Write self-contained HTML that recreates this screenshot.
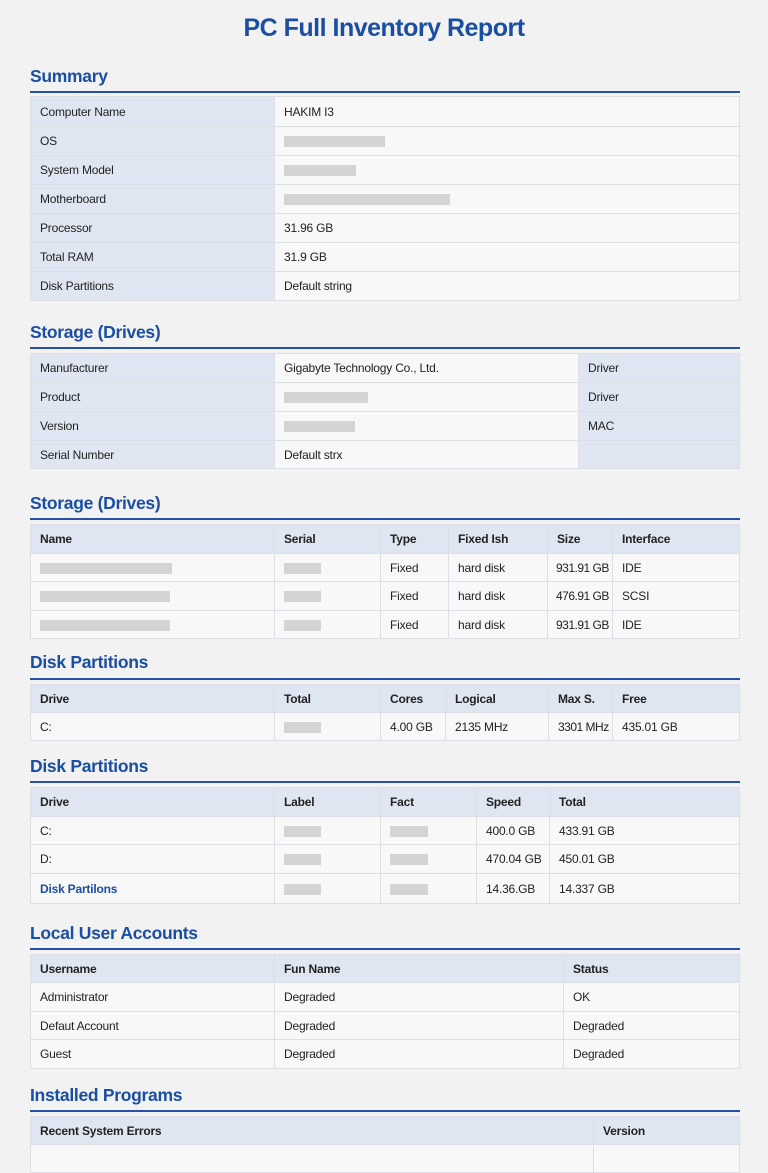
<!DOCTYPE html>
<html><head><meta charset="utf-8"><style>
*{margin:0;padding:0;box-sizing:border-box}
body{width:768px;height:1152px;background:#f2f2f2;font-family:"Liberation Sans",sans-serif;color:#222;position:relative;overflow:hidden}
h1{position:absolute;top:14px;left:0;width:768px;text-align:center;font-size:25px;color:#1a4ea3;font-weight:bold;letter-spacing:-0.5px}
h2{position:absolute;left:30px;font-size:17.5px;color:#1a4ea3;font-weight:bold;letter-spacing:-0.3px}
.ln{position:absolute;left:30px;width:710px;height:2px;background:#2a4fa8}
table{position:absolute;left:30px;width:710px;border-collapse:collapse;table-layout:fixed;background:#f8f8f8;font-size:12px;letter-spacing:-0.2px;border:1px solid #d8dde5}
td{border:1px solid #dcdfe4;padding:0 8px 0 9px;white-space:nowrap;overflow:hidden}
.h td,td.l{background:#dfe6f1;font-weight:bold;color:#222}
td.l.n{font-weight:normal}
.b{display:inline-block;height:11px;background:#d4d4d4;vertical-align:middle}
.bl{color:#1a4ea3!important}
</style></head><body>
<h1>PC Full Inventory Report</h1>

<h2 style="top:66px">Summary</h2><div class="ln" style="top:91px"></div>
<table style="top:96px"><colgroup><col style="width:244px"><col></colgroup>
<tr style="height:30px"><td class="l n">Computer Name</td><td>HAKIM I3</td></tr>
<tr style="height:29px"><td class="l n">OS</td><td><span class="b" style="width:101px"></span></td></tr>
<tr style="height:29px"><td class="l n">System Model</td><td><span class="b" style="width:72px"></span></td></tr>
<tr style="height:29px"><td class="l n">Motherboard</td><td><span class="b" style="width:166px"></span></td></tr>
<tr style="height:29px"><td class="l n">Processor</td><td>31.96 GB</td></tr>
<tr style="height:29px"><td class="l n">Total RAM</td><td>31.9 GB</td></tr>
<tr style="height:29px"><td class="l n">Disk Partitions</td><td>Default string</td></tr>
</table>

<h2 style="top:322px">Storage (Drives)</h2><div class="ln" style="top:347px"></div>
<table style="top:353px"><colgroup><col style="width:244px"><col style="width:304px"><col></colgroup>
<tr style="height:29px"><td class="l n">Manufacturer</td><td>Gigabyte Technology Co., Ltd.</td><td class="l n">Driver</td></tr>
<tr style="height:29px"><td class="l n">Product</td><td><span class="b" style="width:84px"></span></td><td class="l n">Driver</td></tr>
<tr style="height:29px"><td class="l n">Version</td><td><span class="b" style="width:71px"></span></td><td class="l n">MAC</td></tr>
<tr style="height:28px"><td class="l n">Serial Number</td><td>Default strx</td><td class="l n"></td></tr>
</table>

<h2 style="top:493px">Storage (Drives)</h2><div class="ln" style="top:518px"></div>
<table style="top:524px"><colgroup><col style="width:244px"><col style="width:106px"><col style="width:68px"><col style="width:99px"><col style="width:65px"><col></colgroup>
<tr class="h" style="height:29px"><td>Name</td><td>Serial</td><td>Type</td><td>Fixed Ish</td><td>Size</td><td>Interface</td></tr>
<tr style="height:28px"><td><span class="b" style="width:132px"></span></td><td><span class="b" style="width:37px"></span></td><td>Fixed</td><td>hard disk</td><td style="padding-left:8px;letter-spacing:-0.5px">931.91 GB</td><td>IDE</td></tr>
<tr style="height:29px"><td><span class="b" style="width:130px"></span></td><td><span class="b" style="width:37px"></span></td><td>Fixed</td><td>hard disk</td><td style="padding-left:8px;letter-spacing:-0.5px">476.91 GB</td><td>SCSI</td></tr>
<tr style="height:28px"><td><span class="b" style="width:130px"></span></td><td><span class="b" style="width:37px"></span></td><td>Fixed</td><td>hard disk</td><td style="padding-left:8px;letter-spacing:-0.5px">931.91 GB</td><td>IDE</td></tr>
</table>

<h2 style="top:652px">Disk Partitions</h2><div class="ln" style="top:678px"></div>
<table style="top:684px"><colgroup><col style="width:244px"><col style="width:106px"><col style="width:65px"><col style="width:103px"><col style="width:64px"><col></colgroup>
<tr class="h" style="height:28px"><td>Drive</td><td>Total</td><td>Cores</td><td>Logical</td><td>Max S.</td><td>Free</td></tr>
<tr style="height:28px"><td>C:</td><td><span class="b" style="width:37px"></span></td><td>4.00 GB</td><td>2135 MHz</td><td style="letter-spacing:-0.5px">3301 MHz</td><td>435.01 GB</td></tr>
</table>

<h2 style="top:756px">Disk Partitions</h2><div class="ln" style="top:781px"></div>
<table style="top:787px"><colgroup><col style="width:244px"><col style="width:106px"><col style="width:96px"><col style="width:73px"><col></colgroup>
<tr class="h" style="height:29px"><td>Drive</td><td>Label</td><td>Fact</td><td>Speed</td><td>Total</td></tr>
<tr style="height:28px"><td>C:</td><td><span class="b" style="width:37px"></span></td><td><span class="b" style="width:38px"></span></td><td>400.0 GB</td><td>433.91 GB</td></tr>
<tr style="height:29px"><td>D:</td><td><span class="b" style="width:37px"></span></td><td><span class="b" style="width:38px"></span></td><td>470.04 GB</td><td>450.01 GB</td></tr>
<tr style="height:30px"><td class="bl" style="font-weight:bold">Disk Partilons</td><td><span class="b" style="width:37px"></span></td><td><span class="b" style="width:38px"></span></td><td>14.36.GB</td><td>14.337 GB</td></tr>
</table>

<h2 style="top:923px">Local User Accounts</h2><div class="ln" style="top:948px"></div>
<table style="top:954px"><colgroup><col style="width:244px"><col style="width:289px"><col></colgroup>
<tr class="h" style="height:28px"><td>Username</td><td>Fun Name</td><td>Status</td></tr>
<tr style="height:29px"><td>Administrator</td><td>Degraded</td><td>OK</td></tr>
<tr style="height:28px"><td>Defaut Account</td><td>Degraded</td><td>Degraded</td></tr>
<tr style="height:29px"><td>Guest</td><td>Degraded</td><td>Degraded</td></tr>
</table>

<h2 style="top:1085px">Installed Programs</h2><div class="ln" style="top:1110px"></div>
<table style="top:1116px"><colgroup><col style="width:563px"><col></colgroup>
<tr class="h" style="height:28px"><td>Recent System Errors</td><td>Version</td></tr>
<tr style="height:28px"><td></td><td></td></tr>
</table>
</body></html>
